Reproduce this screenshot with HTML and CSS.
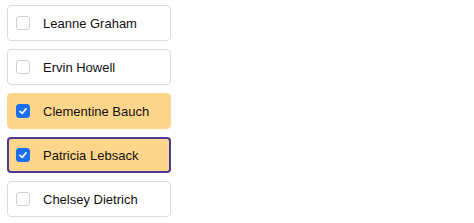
FILE: index.html
```html
<!DOCTYPE html>
<html>
<head>
<meta charset="utf-8">
<link rel="stylesheet" href="styles.css">
</head>
<body>
<ul class="list">
  <li class="item"><span class="box"></span><span class="name">Leanne Graham</span></li>
  <li class="item"><span class="box"></span><span class="name">Ervin Howell</span></li>
  <li class="item selected"><span class="box checked"><svg viewBox="0 0 14 14" width="14" height="14"><path d="M3.5 7.4 L6 9.8 L10.6 4.4" fill="none" stroke="#fff" stroke-width="1.9" stroke-linecap="round" stroke-linejoin="round"/></svg></span><span class="name">Clementine Bauch</span></li>
  <li class="item selected focused"><span class="box checked"><svg viewBox="0 0 14 14" width="14" height="14"><path d="M3.5 7.4 L6 9.8 L10.6 4.4" fill="none" stroke="#fff" stroke-width="1.9" stroke-linecap="round" stroke-linejoin="round"/></svg></span><span class="name">Patricia Lebsack</span></li>
  <li class="item"><span class="box"></span><span class="name">Chelsey Dietrich</span></li>
</ul>
</body>
</html>
```
FILE: styles.css
```css
html, body {
  margin: 0;
  padding: 0;
  background: #fff;
}
body {
  font-family: "Liberation Sans", Arial, sans-serif;
  font-size: 13px;
  color: #111;
}
.list {
  list-style: none;
  margin: 0;
  padding: 5px 0 0 7px;
  display: flex;
  flex-direction: column;
  gap: 8px;
  width: 164px;
}
.item {
  box-sizing: border-box;
  height: 36px;
  border: 1px solid #dcdcdc;
  border-radius: 4px;
  display: flex;
  align-items: center;
  padding-left: 8px;
}
.item.selected {
  background: #fdd68b;
  border-color: #fdd68b;
}
.item.focused {
  border: 2px solid #4b3a9a;
  padding-left: 7px;
}
.box {
  box-sizing: border-box;
  width: 14px;
  height: 14px;
  border: 1px solid #cfcfcf;
  border-radius: 3px;
  background: #fff;
  display: flex;
  align-items: center;
  justify-content: center;
  flex: none;
}
.box.checked {
  background: #1a6ff0;
  border-color: #1a6ff0;
}
.box svg {
  display: block;
}
.name {
  margin-left: 13px;
}
```
